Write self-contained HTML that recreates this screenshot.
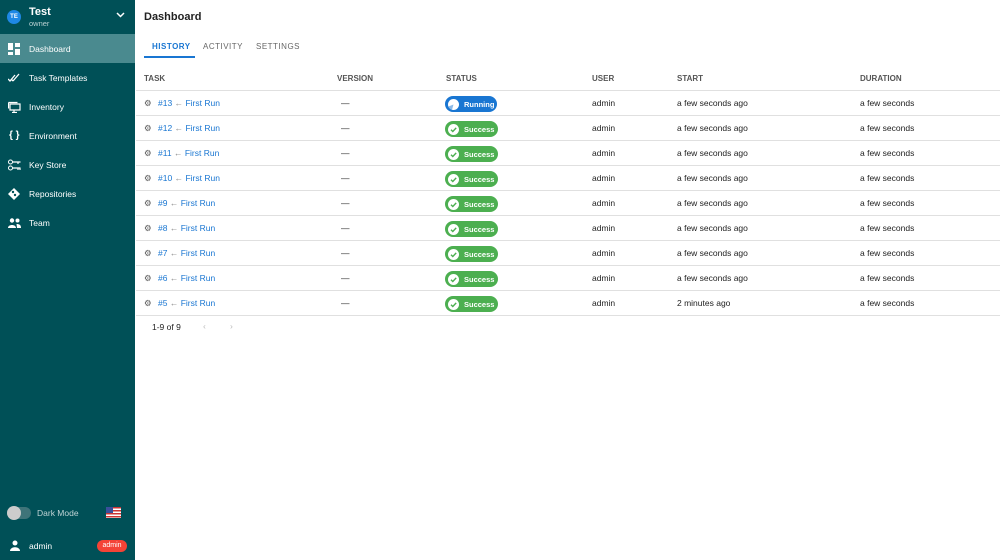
<!DOCTYPE html><html><head><style>
*{margin:0;padding:0;box-sizing:border-box}
body{width:1000px;height:560px;font-family:"Liberation Sans",sans-serif;background:#fff;position:relative;overflow:hidden;font-size:8.5px;color:#222}
.sb{position:absolute;left:0;top:0;width:135px;height:560px;background:#005057;color:#fff}
.nav{position:absolute;left:0;width:135px;height:29px;display:flex;align-items:center;font-size:8.5px}
.nav svg{position:absolute;left:8px}
.nav span{position:absolute;left:29px}
.act{background:#4a8a8f}
.abs{position:absolute}
.row{position:absolute;left:136px;right:0;height:25px;border-bottom:1px solid #e0e0e0}
.row div{position:absolute;top:7px;white-space:nowrap}
a{color:#1976d2;text-decoration:none}
.pill{position:absolute;left:445px;top:4px;height:16px;border-radius:8px;color:#fff;font-size:7.5px;font-weight:bold;display:flex;align-items:center;padding-left:19px}
.pill svg{position:absolute;left:3px;top:2.5px}
</style></head><body>
<div class="sb">
<div class="abs" style="left:7px;top:10px;width:14px;height:14px;border-radius:50%;background:#1e88e5;font-size:6px;font-weight:bold;text-align:center;line-height:14px">TE</div>
<div class="abs" style="left:29px;top:6px;font-size:11px;font-weight:bold">Test</div>
<div class="abs" style="left:29px;top:19px;font-size:7.5px;color:#b8d0d2">owner</div>
<svg class="abs" style="left:116px;top:12px" width="9" height="6"><path d="M1 1l3.5 3.5L8 1" stroke="#fff" stroke-width="1.5" fill="none"/></svg>
<div class="nav act" style="top:34px"><svg width="12" height="12"><path d="M0 0h5v7H0zM7 0h5v4H7zM7 6h5v6H7zM0 9h5v3H0z" fill="#fff"/></svg><span>Dashboard</span></div>
<div class="nav" style="top:63px"><svg width="14" height="10"><path d="M0 6l2 2 5-6M5 8l6-7M3 6l2 2" stroke="#fff" stroke-width="1.3" fill="none"/></svg><span>Task Templates</span></div>
<div class="nav" style="top:92px"><svg width="13" height="12"><path d="M2 3h10v6H2zM0.5 1.5h9M0.5 1.5v6M6 9v2M4 11.5h5" stroke="#fff" stroke-width="1.2" fill="none"/></svg><span>Inventory</span></div>
<div class="nav" style="top:121px"><span style="left:9px;font-weight:bold;font-size:10px">{ }</span><span>Environment</span></div>
<div class="nav" style="top:150px"><svg width="13" height="12"><circle cx="2.5" cy="3" r="2" stroke="#fff" fill="none"/><circle cx="2.5" cy="9" r="2" stroke="#fff" fill="none"/><path d="M4.5 3h8M10 3v2M4.5 9h8M10 9v2M12 9v2" stroke="#fff" stroke-width="1.2"/></svg><span>Key Store</span></div>
<div class="nav" style="top:179px"><svg width="12" height="12"><path d="M6 0l6 6-6 6-6-6z" fill="#fff"/><circle cx="5" cy="4" r="1.2" fill="#005057"/><circle cx="7" cy="7" r="1.2" fill="#005057"/></svg><span>Repositories</span></div>
<div class="nav" style="top:208px"><svg width="13" height="10"><circle cx="4" cy="2.5" r="2.2" fill="#fff"/><circle cx="9.5" cy="2.5" r="2" fill="#fff"/><path d="M0 10c0-4 8-4 8 0zM8.5 6c3 0 4.5 1 4.5 4H9z" fill="#fff"/></svg><span>Team</span></div>
<div class="abs" style="left:7px;top:507px;width:24px;height:12px;border-radius:6px;background:#3f7479"></div>
<div class="abs" style="left:7px;top:506px;width:14px;height:14px;border-radius:50%;background:#ccc"></div>
<div class="abs" style="left:37px;top:508px;color:#c0d4d6">Dark Mode</div>
<div class="abs" style="left:106px;top:507px;width:15px;height:11px;background:repeating-linear-gradient(#c33 0 1.5px,#fff 1.5px 3px)"><div style="width:7px;height:6px;background:#3a4f9a"></div></div>
<svg class="abs" style="left:10px;top:540px" width="10" height="11"><circle cx="5" cy="3" r="2.5" fill="#fff"/><path d="M0 11c0-5 10-5 10 0z" fill="#fff"/></svg>
<div class="abs" style="left:29px;top:541px">admin</div>
<div class="abs" style="left:97px;top:540px;width:30px;height:12px;border-radius:6px;background:#f44336;font-size:7px;text-align:center;line-height:12px">admin</div>
</div>
<div class="abs" style="left:144px;top:11px;font-size:11px;font-weight:bold">Dashboard</div>
<div class="abs" style="left:152px;top:42px;font-size:8px;letter-spacing:.5px;color:#1976d2;font-weight:bold">HISTORY</div>
<div class="abs" style="left:203px;top:42px;font-size:8px;letter-spacing:.5px;color:#666">ACTIVITY</div>
<div class="abs" style="left:256px;top:42px;font-size:8px;letter-spacing:.5px;color:#666">SETTINGS</div>
<div class="abs" style="left:144px;top:56px;width:51px;height:2px;background:#1976d2"></div>
<div class="row" style="top:66px;font-weight:bold;color:#555;font-size:8px"><div style="left:8px;top:8px">TASK</div><div style="left:201px;top:8px">VERSION</div><div style="left:310px;top:8px">STATUS</div><div style="left:456px;top:8px">USER</div><div style="left:541px;top:8px">START</div><div style="left:724px;top:8px">DURATION</div></div>
<div id="rows"></div>
<div class="abs" style="left:152px;top:322px;font-size:8.5px">1-9 of 9</div>
<div class="abs" style="left:203px;top:321px;color:#bbb">‹</div>
<div class="abs" style="left:230px;top:321px;color:#bbb">›</div>
<script>
var h='';for(var i=0;i<9;i++){var n=13-i,t=91+25*i,run=i==0;
h+='<div class="row" style="top:'+t+'px"><div style="left:8px;color:#555">⚙</div><div style="left:22px"><a>#'+n+'</a> <span style="color:#888">←</span> <a>First Run</a></div><div style="left:205px">—</div><div style="left:456px">admin</div><div style="left:541px">'+(i==8?'2 minutes ago':'a few seconds ago')+'</div><div style="left:724px">a few seconds</div></div>';
var ic=run?'<svg width="11" height="11"><circle cx="5.5" cy="5.5" r="5.5" fill="#fff"/><path d="M5.5 5.5L0.5 7.5A5.5 5.5 0 0 0 4 10.8z" fill="#1976d2" opacity=".5"/></svg>':'<svg width="11" height="11"><circle cx="5.5" cy="5.5" r="5.5" fill="#fff"/><path d="M3 5.7l1.8 1.8 3.4-3.6" stroke="#4caf50" stroke-width="1.4" fill="none"/></svg>';
h+='<div class="pill" style="top:'+(t+5)+'px;width:'+(run?52:53)+'px;background:'+(run?'#1976d2':'#4caf50')+'">'+ic+(run?'Running':'Success')+'</div>';}
document.getElementById('rows').innerHTML=h;
</script>
</body></html>
